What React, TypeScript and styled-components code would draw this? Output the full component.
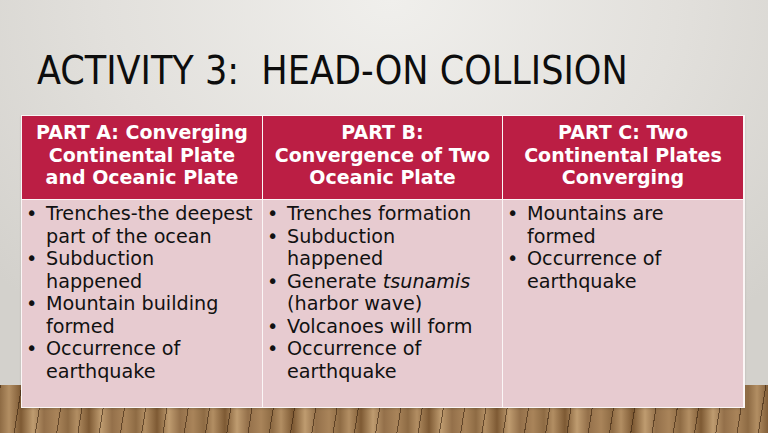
import React from "react";
import styled, { createGlobalStyle } from "styled-components";

const GlobalStyle = createGlobalStyle`
  html, body {
    margin: 0;
    padding: 0;
    overflow: hidden;
  }
`;

const Slide = styled.div`
  position: relative;
  width: 768px;
  height: 433px;
  overflow: hidden;
  font-family: "DejaVu Sans", Verdana, sans-serif;
  background:
    repeating-linear-gradient(
      99deg,
      rgba(55, 32, 12, 0.6) 0px,
      rgba(55, 32, 12, 0.6) 1px,
      transparent 1px,
      transparent 21px
    ) bottom / 100% 48px no-repeat,
    repeating-linear-gradient(
      90deg,
      #8e6b44 0px,
      #b28e63 9px,
      #7e5a34 21px,
      #bf9c70 33px,
      #94704a 44px,
      #a9845a 57px,
      #8e6b44 68px
    ) bottom / 100% 48px no-repeat,
    radial-gradient(
      ellipse 520px 420px at 390px 0px,
      #f0efec 0%,
      #e2e0dc 55%,
      #d3d1cc 100%
    );
  display: flex;
  flex-direction: column;
`;

const Title = styled.h1`
  margin: 0;
  padding: 48px 0 0 37px;
  height: 67px;
  font-family: "DejaVu Sans Condensed", "DejaVu Sans", sans-serif;
  font-stretch: condensed;
  font-weight: normal;
  font-size: 39px;
  line-height: 46px;
  color: #0d0d0d;
  white-space: pre;
`;

const TableWrap = styled.div`
  position: relative;
  margin-left: 21px;
  width: 724px;
`;

const Rule = styled.div`
  position: absolute;
  top: 0;
  left: 71px;
  width: 605px;
  height: 1px;
  background: #c3a8ad;
`;

const Grid = styled.div`
  position: relative;
  display: grid;
  grid-template-columns: 240px 239px 240px;
  grid-template-rows: 83px 207px;
  background: #fbf6f6;
  gap: 1px;
  padding: 1px;
  box-shadow: 0 1px 2px rgba(0, 0, 0, 0.15);
`;

const HeadCell = styled.div`
  background: #bb1e44;
  color: #ffffff;
  font-weight: bold;
  font-size: 19px;
  line-height: 22.5px;
  text-align: center;
  padding: 5px 10px 0;
`;

const BodyCell = styled.ul`
  margin: 0;
  list-style: none;
  background: #e7cbd0;
  color: #111111;
  font-size: 19.2px;
  line-height: 22.5px;
  padding: 3px 7px 0 24px;
`;

const Item = styled.li`
  position: relative;
  &::before {
    content: "•";
    position: absolute;
    left: -20px;
  }
`;

const columns: { head: string; items: React.ReactNode[] }[] = [
  {
    head: "PART A: Converging Continental Plate and Oceanic Plate",
    items: [
      "Trenches-the deepest part of the ocean",
      "Subduction happened",
      "Mountain building formed",
      "Occurrence of earthquake",
    ],
  },
  {
    head: "PART B: Convergence of Two Oceanic Plate",
    items: [
      "Trenches formation",
      "Subduction happened",
      <>
        Generate <i>tsunamis</i> (harbor wave)
      </>,
      "Volcanoes will form",
      "Occurrence of earthquake",
    ],
  },
  {
    head: "PART C: Two Continental Plates Converging",
    items: ["Mountains are formed", "Occurrence of earthquake"],
  },
];

export default function App() {
  return (
    <Slide>
      <GlobalStyle />
      <Title>{"ACTIVITY 3:  HEAD-ON COLLISION"}</Title>
      <TableWrap>
        <Rule />
        <Grid>
          {columns.map((c) => (
            <HeadCell key={c.head}>{c.head}</HeadCell>
          ))}
          {columns.map((c) => (
            <BodyCell key={c.head + "-b"}>
              {c.items.map((it, i) => (
                <Item key={i}>{it}</Item>
              ))}
            </BodyCell>
          ))}
        </Grid>
      </TableWrap>
    </Slide>
  );
}
